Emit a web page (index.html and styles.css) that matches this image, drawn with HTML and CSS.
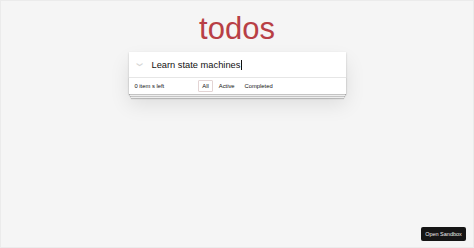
FILE: index.html
```html
<!DOCTYPE html>
<html lang="en">
<head>
  <meta charset="UTF-8">
  <meta name="viewport" content="width=device-width, initial-scale=1.0">
  <title>todos</title>
  <link rel="stylesheet" href="styles.css">
</head>
<body>
  <div class="pagina">
    <section class="todoapp">
      <h1 class="titulo">todos</h1>

      <div class="tarjeta">
        <div class="entrada">
          <span class="toggle-all">&#10095;</span>
          <span class="nuevo">Learn state machines<span class="cursor"></span></span>
        </div>

        <footer class="pie">
          <span class="contador">0 item s left</span>
          <ul class="filtros">
            <li><a class="seleccionado">All</a></li>
            <li><a>Active</a></li>
            <li><a>Completed</a></li>
          </ul>
          <span></span>
        </footer>
      </div>
    </section>
  </div>

  <a class="sandbox">Open Sandbox</a>
</body>
</html>
```

FILE: styles.css
```css
html, body {
  margin: 0;
  padding: 0;
}
body {
  font-family: "Liberation Sans", Arial, sans-serif;
  background-color: #f5f5f5;
  color: #111;
}
.pagina {
  height: 248px;
  box-sizing: border-box;
  border: 1px solid #ebebeb;
  overflow: hidden;
}
.todoapp {
  width: 217px;
  margin: 0 auto;
}
.titulo {
  margin: 8px 0 0;
  font-size: 31px;
  line-height: 40px;
  font-weight: normal;
  text-align: center;
  color: #b83f45;
}
.tarjeta {
  margin-top: 3px;
  background-color: #fff;
  box-shadow: 0 1px 2px rgba(0,0,0,0.2), 0 10px 20px rgba(0,0,0,0.1);
}
.entrada {
  height: 25px;
  display: flex;
  align-items: center;
}
.toggle-all {
  width: 23px;
  text-align: center;
  font-size: 6px;
  color: #d6d6d6;
  transform: rotate(90deg);
}
.nuevo {
  font-size: 9.3px;
  color: #111;
  display: flex;
  align-items: center;
}
.cursor {
  display: inline-block;
  width: 1px;
  height: 10px;
  background-color: #111;
  margin-left: 1px;
}
.pie {
  height: 16px;
  border-top: 1px solid #e6e6e6;
  padding: 0 6px;
  display: grid;
  grid-template-columns: 1fr auto 1fr;
  align-items: center;
  font-size: 5.8px;
  color: #111;
  box-shadow: 0 1px 1px rgba(0,0,0,0.2),
              0 3px 0 -1px #f6f6f6,
              0 4px 1px -1px rgba(0,0,0,0.2),
              0 6px 0 -2px #f6f6f6,
              0 7px 1px -2px rgba(0,0,0,0.2);
}
.filtros {
  list-style: none;
  margin: 0 0 0 1px;
  padding: 0;
  display: flex;
  gap: 2px;
}
.filtros a {
  display: block;
  padding: 2px 3px;
  border: 1px solid transparent;
  border-radius: 1px;
}
.filtros a.seleccionado {
  border-color: #e3d4d4;
}
.sandbox {
  position: fixed;
  right: 8px;
  bottom: 7px;
  width: 45px;
  height: 14px;
  line-height: 14px;
  text-align: center;
  background-color: #151515;
  color: #eee;
  font-size: 5.5px;
  border-radius: 2px;
}
```
